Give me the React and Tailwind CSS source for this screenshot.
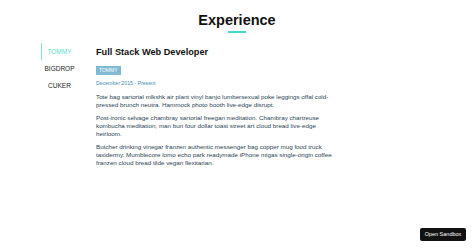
export default function App() {
  const navItems = ["TOMMY", "BIGDROP", "CUKER"];
  return (
    <div className="relative w-[474px] h-[248px] bg-white font-['Liberation_Sans',Arial,sans-serif] overflow-hidden">
      <div className="pt-[12px] flex flex-col items-center">
        <h2 className="text-[14.5px] leading-[16px] font-bold text-[#111]">Experience</h2>
        <div className="mt-[3px] w-[18px] h-[2px] bg-[#3fd9c6]" />
      </div>
      <div className="flex items-start pl-[41px] mt-[10px]">
        <ul className="w-[36px] flex flex-col">
          {navItems.map((n, i) => (
            <li
              key={n}
              className={
                "h-[17px] flex items-center justify-center text-[6.5px] leading-[8px] " +
                (i === 0
                  ? "border-l border-[#7ae8dc] text-[#5ddfcf]"
                  : "border-l border-transparent text-[#222]")
              }
            >
              {n}
            </li>
          ))}
        </ul>
        <div className="ml-[19px] mt-[4px] w-[238px]">
          <h3 className="text-[9.2px] leading-[11px] font-bold text-[#111]">Full Stack Web Developer</h3>
          <div className="mt-[8px] w-fit flex items-center h-[9px] px-[3px] bg-[#7fbad2] text-white text-[5px] leading-[9px]">
            TOMMY
          </div>
          <div className="mt-[5px] text-[5.2px] leading-[7px] text-[#3d8fb8]">December 2015 - Present</div>
          <div className="mt-[6px] flex flex-col gap-[5px] text-[6.25px] leading-[8px] text-[#2b4556]">
            <p>
              Tote bag sartorial mlkshk air plant vinyl banjo lumbersexual poke leggings offal cold-pressed brunch neutra. Hammock photo booth live-edge disrupt.
            </p>
            <p>
              Post-ironic selvage chambray sartorial freegan meditation. Chambray chartreuse kombucha meditation, man bun four dollar toast street art cloud bread live-edge heirloom.
            </p>
            <p>
              Butcher drinking vinegar franzen authentic messenger bag copper mug food truck taxidermy. Mumblecore lomo echo park readymade iPhone migas single-origin coffee franzen cloud bread tilde vegan flexitarian.
            </p>
          </div>
        </div>
      </div>
      <button className="absolute right-[8px] bottom-[7px] w-[46px] h-[13px] rounded-[2px] bg-[#111] text-white text-[5.5px] leading-[13px] flex items-center justify-center">
        Open Sandbox
      </button>
    </div>
  );
}
